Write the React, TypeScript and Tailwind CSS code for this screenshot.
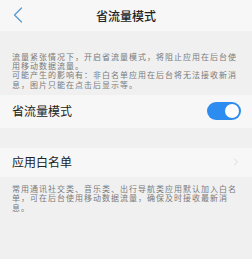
import { ChevronRight } from 'lucide-react';

const font = { fontFamily: '"Noto Sans CJK SC", "Noto Sans", sans-serif' };

const App = () => {
    return (
        <div className="w-[252px] h-[259px] bg-[#f0f0f0] overflow-hidden" style={font}>
            {/* Header */}
            <div className="relative h-[31px] bg-[#f7f7f7] flex items-center justify-center">
                <svg className="absolute left-[13px] top-[7px]" width="10" height="16" viewBox="0 0 10 16" fill="none" stroke="#5a9ad0" strokeWidth="1.3" strokeLinecap="round" strokeLinejoin="round">
                    <path d="M8.5 1 1.5 8l7 7" />
                </svg>
                <span className="text-[12px] font-medium text-[#222]">省流量模式</span>
            </div>

            {/* Description */}
            <div className="pl-[12px] pr-[13px] pt-[21px] text-[8px] tracking-[1px] leading-[9.2px] text-[#7a7a7a]">
                <p>流量紧张情况下，开启省流量模式，将阻止应用在后台使用移动数据流量。</p>
                <p>可能产生的影响有：非白名单应用在后台将无法接收新消息，图片只能在点击后显示等。</p>
            </div>

            {/* Toggle row */}
            <div className="mt-[6px] h-[33px] bg-[#f7f7f7] flex items-center justify-between pl-[12px] pr-[11px]">
                <span className="text-[12px] text-[#222]">省流量模式</span>
                <div className="w-[34px] h-[18px] rounded-full bg-[#2d8cf0] flex items-center justify-end pr-[2px]">
                    <div className="w-[14px] h-[14px] rounded-full bg-white" />
                </div>
            </div>

            {/* Whitelist row */}
            <div className="mt-[20px] h-[29px] bg-[#f7f7f7] flex items-center justify-between pl-[12px] pr-[10px]">
                <span className="text-[12px] text-[#222]">应用白名单</span>
                <ChevronRight className="w-[12px] h-[12px] text-[#d0d0d0]" strokeWidth={1.5} />
            </div>

            <div className="pl-[12px] pr-[8px] pt-[7px] text-[8px] tracking-[1px] leading-[9.6px] text-[#7a7a7a] whitespace-nowrap">
                <p>
                    常用通讯社交类、音乐类、出行导航类应用默认加入白名
                    <br />
                    单，可在后台使用移动数据流量，确保及时接收最新消
                    <br />
                    息。
                </p>
            </div>
        </div>
    );
};

export default App;
